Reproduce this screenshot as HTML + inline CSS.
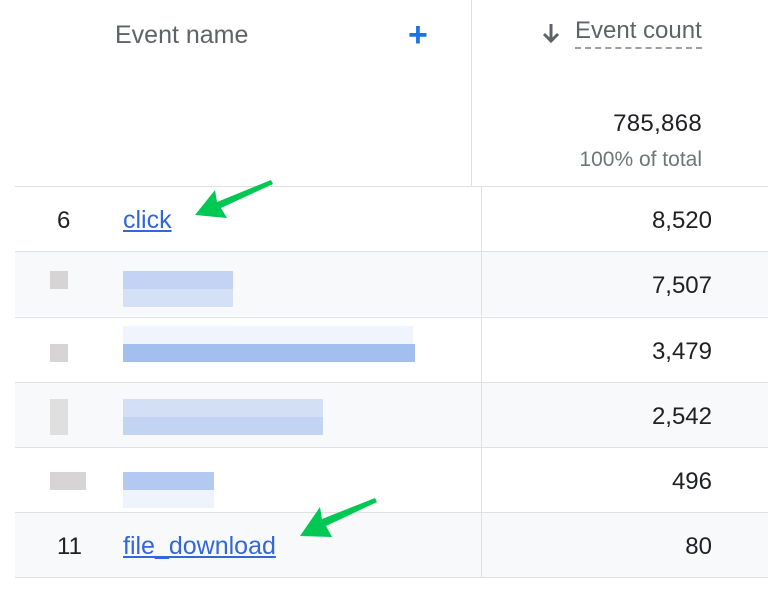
<!DOCTYPE html>
<html><head><style>
body{margin:0;width:768px;height:590px;background:#fff;position:relative;overflow:hidden;font-family:"Liberation Sans",Arial,sans-serif}
.a{position:absolute}
.row{position:absolute;left:15px;width:753px;height:64px;border-top:1px solid #e0e0e0}
.num{position:absolute;right:56px;font-size:24px;color:#202124;top:20px}
.idx{position:absolute;font-size:24px;color:#202124}
.lnk{position:absolute;left:108px;font-size:25px;color:#3367d6;text-decoration:underline}
.vl{position:absolute;left:466px;top:0;width:1px;height:64px;background:#e0e0e0}
</style></head><body>
<div class="a" style="left:115px;top:21px;font-size:25px;color:#5f6368">Event name</div>
<div class="a" style="left:408px;top:18px;font-size:34px;font-weight:bold;color:#1a73e8;line-height:1">+</div>
<div class="a" style="left:471px;top:0;width:1px;height:186px;background:#e0e0e0"></div>
<svg class="a" style="left:541px;top:22px" width="20" height="22"><path d="M10 2V19M3 12L10 19L17 12" stroke="#5f6368" stroke-width="3" fill="none"/></svg>
<div class="a" style="left:575px;top:17px;font-size:24px;color:#5f6368;border-bottom:2px dashed #9aa0a6;padding-bottom:2px">Event count</div>
<div class="a" style="right:66px;top:110px;font-size:24px;color:#202124;letter-spacing:0.3px">785,868</div>
<div class="a" style="right:66px;top:148px;font-size:21px;color:#70757a">100% of total</div>

<div class="row" style="top:186px;background:#fff"><div class="vl"></div><div class="idx" style="left:42px;top:20px">6</div><div class="lnk" style="top:19px">click</div><div class="num">8,520</div></div>
<div class="row" style="top:251px;background:#f8f9fa"><div class="vl"></div>
<div class="a" style="left:35px;top:19px;width:18px;height:18px;background:#d6d4d4"></div>
<div class="a" style="left:108px;top:19px;width:110px;height:18px;background:#c2d3f3"></div>
<div class="a" style="left:108px;top:37px;width:110px;height:18px;background:#d3e0f5"></div>
<div class="num">7,507</div></div>
<div class="row" style="top:317px;background:#fff"><div class="vl"></div>
<div class="a" style="left:35px;top:26px;width:18px;height:18px;background:#d6d4d4"></div>
<div class="a" style="left:108px;top:8px;width:290px;height:18px;background:#f0f5fd"></div>
<div class="a" style="left:108px;top:26px;width:292px;height:18px;background:#a3bfef"></div>
<div class="num">3,479</div></div>
<div class="row" style="top:382px;background:#f8f9fa"><div class="vl"></div>
<div class="a" style="left:35px;top:16px;width:18px;height:36px;background:#e0dfdf"></div>
<div class="a" style="left:108px;top:16px;width:200px;height:18px;background:#d2dff5"></div>
<div class="a" style="left:108px;top:34px;width:200px;height:18px;background:#c3d4f3"></div>
<div class="num">2,542</div></div>
<div class="row" style="top:447px;background:#fff"><div class="vl"></div>
<div class="a" style="left:35px;top:24px;width:36px;height:18px;background:#d6d4d4"></div>
<div class="a" style="left:108px;top:24px;width:91px;height:18px;background:#b3c9f2"></div>
<div class="a" style="left:108px;top:42px;width:91px;height:18px;background:#eef3fc"></div>
<div class="num">496</div></div>
<div class="row" style="top:512px;background:#f8f9fa;border-bottom:1px solid #e0e0e0"><div class="vl"></div><div class="idx" style="left:42px;top:20px">11</div><div class="lnk" style="top:19px">file_download</div><div class="num">80</div></div>

<svg class="a" style="left:0;top:0" width="768" height="590">
<polygon points="195,215 215,190 217,202 271,180 273,184 221,208 227,218" fill="#00c853"/>
<polygon points="300,536 320,507 322,519 375,498 377,502 326,526 332,537" fill="#00c853"/>
</svg>
</body></html>
